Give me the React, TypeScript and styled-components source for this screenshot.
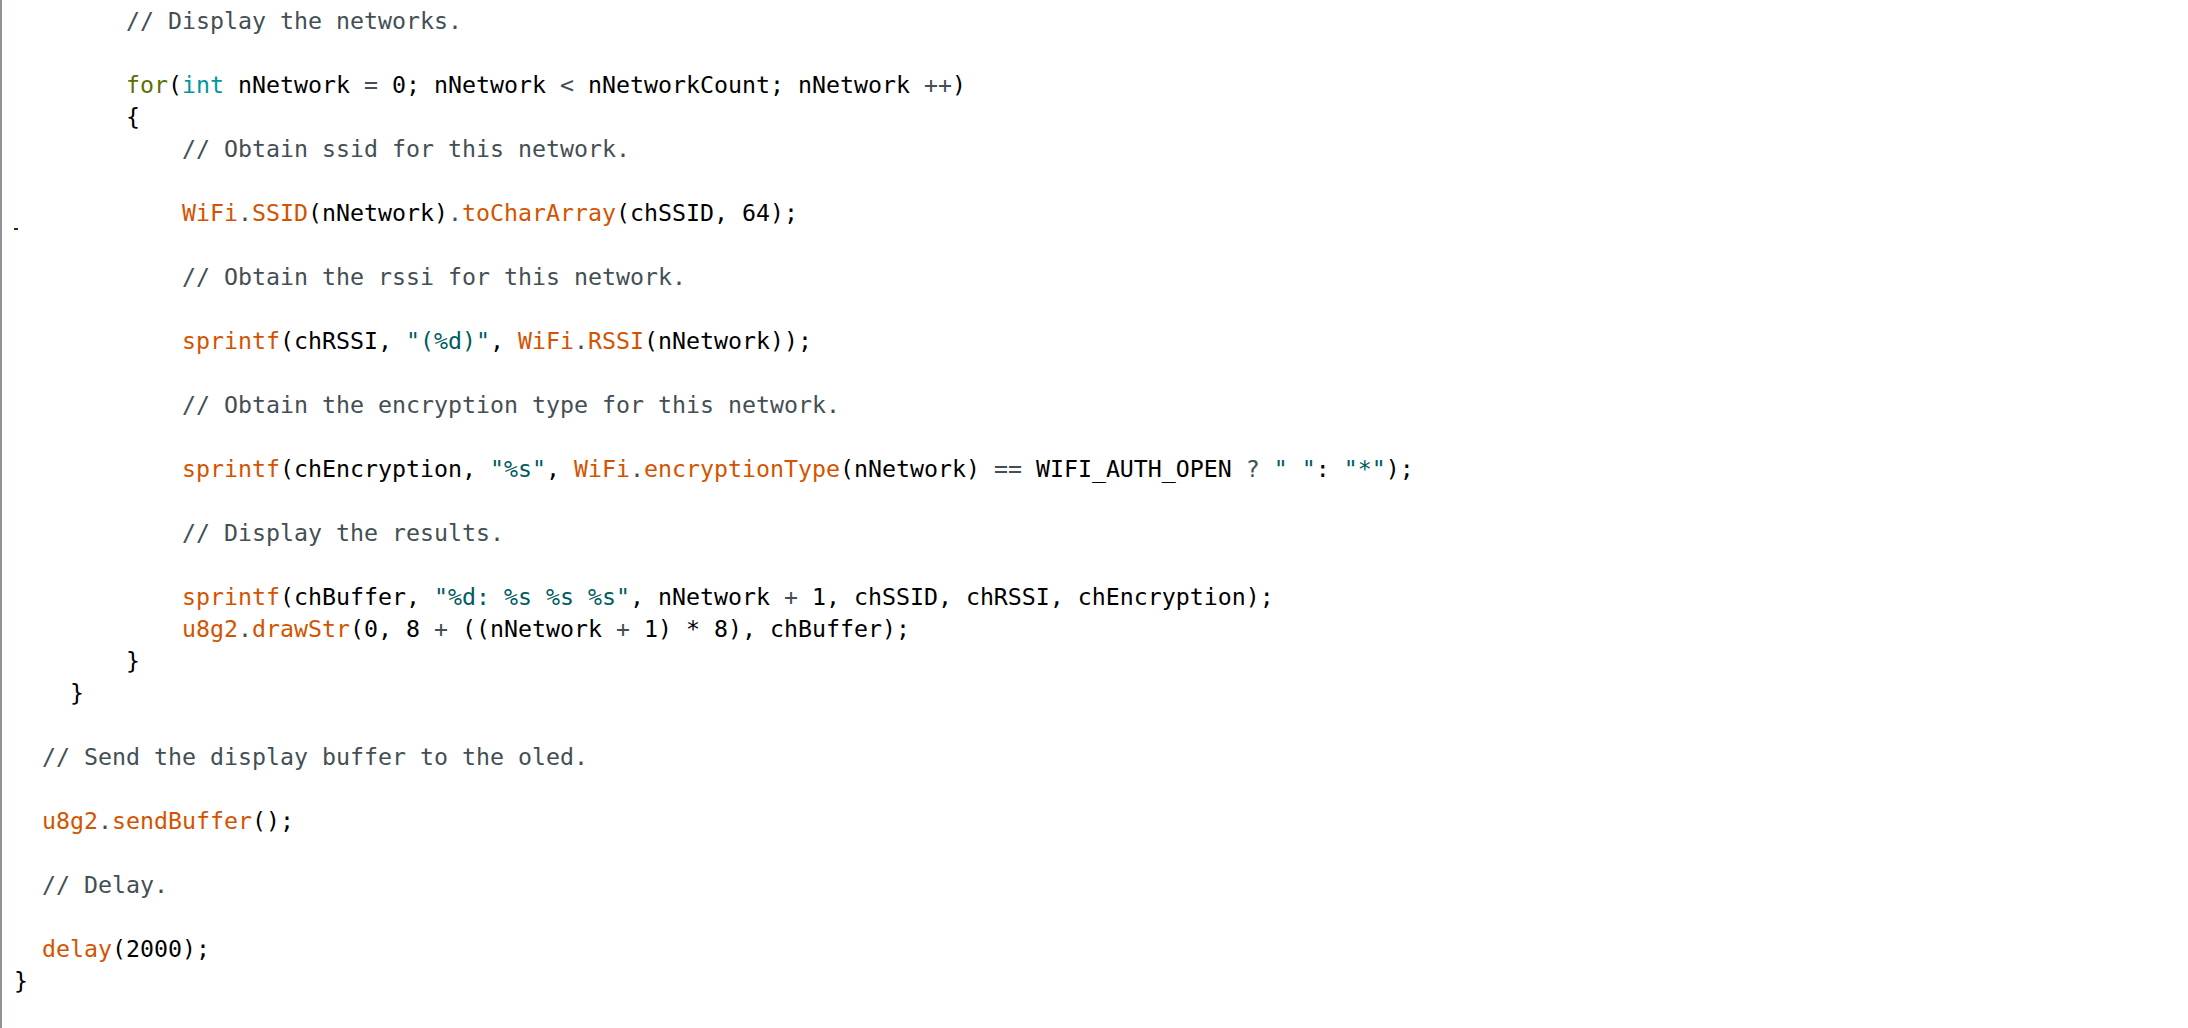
import React from "react";
import styled, { createGlobalStyle } from "styled-components";

const Global = createGlobalStyle`
  html, body { margin: 0; padding: 0; background: #ffffff; }
  body { width: 2188px; height: 1028px; overflow: hidden; }
`;

type Kind = "txt" | "cmt" | "fn" | "kw" | "ty" | "str" | "op";

const colors: Record<Kind, string> = {
  txt: "#000000",
  cmt: "#434f54",
  fn: "#d35400",
  kw: "#5e6d03",
  ty: "#00979c",
  str: "#005c5f",
  op: "#434f54",
};

const Page = styled.div`
  width: 2188px;
  height: 1028px;
  background: #ffffff;
  display: flex;
`;

const Gutter = styled.div`
  width: 2px;
  flex: none;
  background: #8d9296;
`;

const Editor = styled.div`
  position: relative;
  flex: 1;
  padding: 5px 0 0 12px;
  font-family: "DejaVu Sans Mono", "Liberation Mono", monospace;
  font-size: 23.25px;
  line-height: 32px;
  white-space: pre;
`;

const Line = styled.div`
  height: 32px;
`;

const Tok = styled.span<{ $kind: Kind }>`
  color: ${(p) => colors[p.$kind]};
`;

const Mark = styled.span`
  position: absolute;
  left: 12px;
  top: 228px;
  width: 4px;
  height: 2px;
  background: #2b2b10;
`;

type T = [Kind, string];
const C = (s: string): T => ["cmt", s];
const F = (s: string): T => ["fn", s];
const X = (s: string): T => ["txt", s];
const S = (s: string): T => ["str", s];
const O = (s: string): T => ["op", s];

const lines: T[][] = [
  [X("        "), C("// Display the networks.")],
  [],
  [
    X("        "),
    ["kw", "for"],
    X("("),
    ["ty", "int"],
    X(" nNetwork "),
    O("="),
    X(" 0; nNetwork "),
    O("<"),
    X(" nNetworkCount; nNetwork "),
    O("++"),
    X(")"),
  ],
  [X("        {")],
  [X("            "), C("// Obtain ssid for this network.")],
  [],
  [
    X("            "),
    F("WiFi"),
    O("."),
    F("SSID"),
    X("(nNetwork)"),
    O("."),
    F("toCharArray"),
    X("(chSSID, 64);"),
  ],
  [],
  [X("            "), C("// Obtain the rssi for this network.")],
  [],
  [
    X("            "),
    F("sprintf"),
    X("(chRSSI, "),
    S('"(%d)"'),
    X(", "),
    F("WiFi"),
    O("."),
    F("RSSI"),
    X("(nNetwork));"),
  ],
  [],
  [X("            "), C("// Obtain the encryption type for this network.")],
  [],
  [
    X("            "),
    F("sprintf"),
    X("(chEncryption, "),
    S('"%s"'),
    X(", "),
    F("WiFi"),
    O("."),
    F("encryptionType"),
    X("(nNetwork) "),
    O("=="),
    X(" WIFI_AUTH_OPEN "),
    O("?"),
    X(" "),
    S('" "'),
    X(": "),
    S('"*"'),
    X(");"),
  ],
  [],
  [X("            "), C("// Display the results.")],
  [],
  [
    X("            "),
    F("sprintf"),
    X("(chBuffer, "),
    S('"%d: %s %s %s"'),
    X(", nNetwork "),
    O("+"),
    X(" 1, chSSID, chRSSI, chEncryption);"),
  ],
  [
    X("            "),
    F("u8g2"),
    O("."),
    F("drawStr"),
    X("(0, 8 "),
    O("+"),
    X(" ((nNetwork "),
    O("+"),
    X(" 1) * 8), chBuffer);"),
  ],
  [X("        }")],
  [X("    }")],
  [],
  [X("  "), C("// Send the display buffer to the oled.")],
  [],
  [X("  "), F("u8g2"), O("."), F("sendBuffer"), X("();")],
  [],
  [X("  "), C("// Delay.")],
  [],
  [X("  "), F("delay"), X("(2000);")],
  [X("}")],
];

export default function App() {
  return (
    <>
      <Global />
      <Page>
        <Gutter />
        <Editor>
          <Mark />
          {lines.map((toks, i) => (
            <Line key={i}>
              {toks.map(([k, s], j) => (
                <Tok key={j} $kind={k}>
                  {s}
                </Tok>
              ))}
            </Line>
          ))}
        </Editor>
      </Page>
    </>
  );
}
